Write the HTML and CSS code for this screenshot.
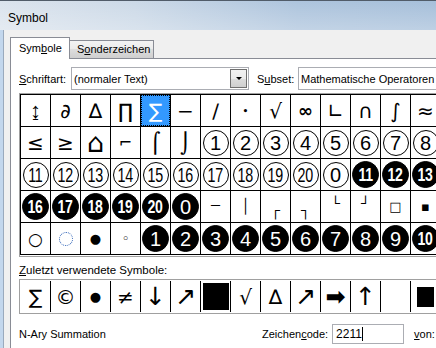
FILE: index.html
```html
<!DOCTYPE html>
<html lang="de">
<head>
    <meta charset="UTF-8">
    <link rel="stylesheet" href="styles.css">
    <title>Symbol</title>
</head>
<body>
    <div class="window">
        <div class="titlebar">Symbol</div>

        <div class="content">
            <div class="tabs">
                <div class="tab active">Sym<u>b</u>ole</div>
                <div class="tab">S<u>o</u>nderzeichen</div>
            </div>

            <div class="panel">
                <div class="font-row">
                    <label class="font-label"><u>S</u>chriftart:</label>
                    <div class="combo">
                        <span>(normaler Text)</span>
                        <span class="drop"></span>
                    </div>
                    <label class="subset-label">S<u>u</u>bset:</label>
                    <div class="combo subset">Mathematische Operatoren</div>
                </div>

                <div class="grid-frame">
                    <div class="grid">
                        <span class="thin">↨</span><span>∂</span><span>∆</span><span>∏</span><span class="sel">∑</span><span>−</span><span>∕</span><span class="dot">∙</span><span>√</span><span class="inf">∞</span><span>∟</span><span>∩</span><span>∫</span><span>≈</span><span>≠</span><span>≡</span>

                        <span>≤</span><span>≥</span><span class="house">⌂</span><span class="small">⌐</span><span>⌠</span><span>⌡</span>
                        <span><i class="ring">1</i></span><span><i class="ring">2</i></span><span><i class="ring">3</i></span><span><i class="ring">4</i></span><span><i class="ring">5</i></span><span><i class="ring">6</i></span><span><i class="ring">7</i></span><span><i class="ring">8</i></span><span><i class="ring">9</i></span><span><i class="ring"><b>10</b></i></span>

                        <span><i class="ring"><b>11</b></i></span><span><i class="ring"><b>12</b></i></span><span><i class="ring"><b>13</b></i></span><span><i class="ring"><b>14</b></i></span><span><i class="ring"><b>15</b></i></span><span><i class="ring"><b>16</b></i></span><span><i class="ring"><b>17</b></i></span><span><i class="ring"><b>18</b></i></span><span><i class="ring"><b>19</b></i></span><span><i class="ring"><b>20</b></i></span><span><i class="ring">0</i></span>
                        <span><i class="disc"><b>11</b></i></span><span><i class="disc"><b>12</b></i></span><span><i class="disc"><b>13</b></i></span><span><i class="disc"><b>14</b></i></span><span><i class="disc"><b>15</b></i></span>

                        <span><i class="disc"><b>16</b></i></span><span><i class="disc"><b>17</b></i></span><span><i class="disc"><b>18</b></i></span><span><i class="disc"><b>19</b></i></span><span><i class="disc"><b>20</b></i></span><span><i class="disc">0</i></span>
                        <span class="box">─</span><span class="box">│</span><span class="box low">┌</span><span class="box low">┐</span><span class="box high">└</span><span class="box high">┘</span><span class="tiny">□</span><span class="tiny">▪</span><span class="tiny">▫</span><span class="tiny">▬</span>

                        <span class="circle">○</span><span><i class="dots"></i></span><span class="tiny">●</span><span class="tiny">◦</span>
                        <span><i class="disc">1</i></span><span><i class="disc">2</i></span><span><i class="disc">3</i></span><span><i class="disc">4</i></span><span><i class="disc">5</i></span><span><i class="disc">6</i></span><span><i class="disc">7</i></span><span><i class="disc">8</i></span><span><i class="disc">9</i></span><span><i class="disc"><b>10</b></i></span><span>★</span><span>☆</span>
                    </div>
                </div>

                <div class="recent-label"><u>Z</u>uletzt verwendete Symbole:</div>
                <div class="recent">
                    <span>∑</span><span>©</span><span class="tiny">●</span><span>≠</span><span class="arrow">↓</span><span class="arrow">↗</span><span><i class="block"></i></span><span>√</span><span>∆</span><span class="arrow">↗</span><span class="heavy">➡</span><span class="arrow">↑</span><span></span><span><i class="square"></i></span><span></span><span></span>
                </div>

                <div class="info-row">
                    <span class="desc">N-Ary Summation</span>
                    <label>Zeichen<u>c</u>ode:</label>
                    <div class="field">2211<span class="caret"></span></div>
                    <label class="von"><u>v</u>on:</label>
                    <div class="field"></div>
                </div>
            </div>
        </div>
    </div>
</body>
</html>
```

FILE: styles.css
```css
*{
    box-sizing: border-box;
}

body{
    margin: 0;
    width: 436px;
    height: 348px;
    overflow: hidden;
    background-color: #f0f0f0;
    font-family: "Liberation Sans", Arial, sans-serif;
    font-size: 11px;
    color: #000;
}

.window{
    width: 540px;
    height: 348px;
}

.titlebar{
    height: 30px;
    padding: 10px 0 0 8px;
    font-size: 12px;
    border-top: 1px solid #515c69;
    background:
        linear-gradient(to bottom, rgba(255, 255, 255, 0.05), rgba(255, 255, 255, 0.3)),
        linear-gradient(to right, #d9e2ec 0%, #c9d7e6 25%, #a9c1db 55%, #9cb8d6 100%);
}

.content{
    height: 318px;
    border-left: 3px solid #c3d7ed;
    box-shadow: inset 1px 0 #9aaabd;
    padding: 7px 0 0 7px;
}

/* tabs */
.tabs{
    display: flex;
    align-items: flex-end;
    height: 21px;
}

.tab{
    height: 18px;
    padding: 2px 0 0 7px;
    width: 85px;
    margin-left: -1px;
    border: 1px solid #898c95;
    border-bottom: none;
    background: linear-gradient(to bottom, #f3f3f3, #ebebeb 50%, #dddddd 50%, #cfcfcf);
}

.tab.active{
    position: relative;
    z-index: 1;
    width: 60px;
    height: 22px;
    margin: 0 0 -1px 0;
    padding: 4px 0 0 8px;
    background: #fff;
}

.panel{
    height: 300px;
    border: 1px solid #898c95;
    background: #fff;
    padding: 8px 0 0 8px;
}

/* Schriftart / Subset */
.font-row{
    display: flex;
    align-items: center;
    height: 23px;
}

.font-label{
    width: 52px;
}

.combo{
    display: flex;
    align-items: center;
    justify-content: space-between;
    width: 178px;
    height: 23px;
    padding: 0 1px 0 2px;
    border: 1px solid #abadb3;
}

.drop{
    width: 17px;
    height: 19px;
    border: 1px solid #707070;
    background: linear-gradient(to bottom, #f2f2f2, #ebebeb 50%, #dddddd 50%, #cfcfcf);
    display: flex;
    align-items: center;
    justify-content: center;
}

.drop::after{
    content: "";
    border-left: 3px solid transparent;
    border-right: 3px solid transparent;
    border-top: 3px solid #000;
}

.subset-label{
    width: 41px;
    margin-left: 8px;
}

.combo.subset{
    width: 200px;
    justify-content: flex-start;
}

/* symbol grid */
.grid-frame{
    width: 483px;
    margin-top: 3px;
    border: 1px solid #a0a0a0;
    padding-bottom: 1px;
}

.grid{
    display: grid;
    grid-template-columns: repeat(16, 29px);
    grid-auto-rows: 31px;
    gap: 1px;
    background: #000;
    border: 1px solid #000;
}

.grid span, .recent span{
    display: flex;
    align-items: center;
    justify-content: center;
    background: #fff;
    font-family: "DejaVu Sans", sans-serif;
    font-size: 20px;
}

.grid .sel{
    background: #3399ff;
    color: #fff;
    outline: 1px dotted #000;
    outline-offset: -1px;
}

.grid .thin{
    font-family: "Liberation Sans", sans-serif;
    font-size: 22px;
}

.grid .inf{
    font-weight: bold;
    font-size: 18px;
}

.grid .dot{
    font-size: 11px;
}

.grid .house{
    font-size: 27px;
}

.grid .small{
    font-size: 16px;
}

.grid .circle{
    font-size: 17px;
    font-weight: bold;
}

.grid .box{
    font-family: "Liberation Mono", monospace;
    font-size: 15px;
}

.grid .box.low{
    padding-top: 9px;
}

.grid .box.high{
    padding-bottom: 4px;
}

.tiny{
    font-size: 13px !important;
}

.ring, .disc{
    display: flex;
    align-items: center;
    justify-content: center;
    width: 26px;
    height: 26px;
    border: 1.5px solid #000;
    border-radius: 50%;
    font-style: normal;
    font-family: "Liberation Sans", sans-serif;
    font-size: 20px;
    line-height: 1;
}

.disc{
    width: 27px;
    height: 27px;
    background: #000;
    color: #fff;
    font-size: 20px;
}

/* zweistellige Zahlen schmaler */
.ring b, .disc b{
    display: inline-block;
    font-weight: normal;
    font-size: 21px;
    letter-spacing: -0.5px;
    transform: scaleX(0.68);
}

.disc b{
    font-weight: bold;
    font-size: 19px;
    transform: scaleX(0.74);
}

.dots{
    width: 14px;
    height: 14px;
    border: 1px dotted #2a5fb5;
    border-radius: 50%;
}

/* zuletzt verwendet */
.recent-label{
    margin-top: 6px;
    line-height: 14px;
    font-size: 11.5px;
}

.recent{
    display: flex;
    width: 483px;
    margin-top: 2px;
    padding: 1px 0 1px 1px;
    border: 1px solid #a0a0a0;
}

.recent span{
    flex: none;
    width: 30px;
    height: 31px;
    border-right: 1px solid #000;
}

.recent .arrow{
    font-size: 25px;
}

.recent .heavy{
    font-size: 24px;
    font-weight: bold;
}

.block{
    width: 26px;
    height: 27px;
    background: #000;
}

.square{
    width: 17px;
    height: 20px;
    background: #000;
}

/* untere Zeile */
.info-row{
    display: flex;
    align-items: center;
    height: 20px;
    margin-top: 10px;
}

.desc{
    width: 243px;
}

.field{
    display: flex;
    align-items: center;
    width: 72px;
    height: 20px;
    margin-left: 4px;
    padding-left: 3px;
    border: 1px solid #abadb3;
    font-size: 12px;
}

.caret{
    width: 1px;
    height: 14px;
    background: #000;
}

.von{
    margin-left: 10px;
}
```
